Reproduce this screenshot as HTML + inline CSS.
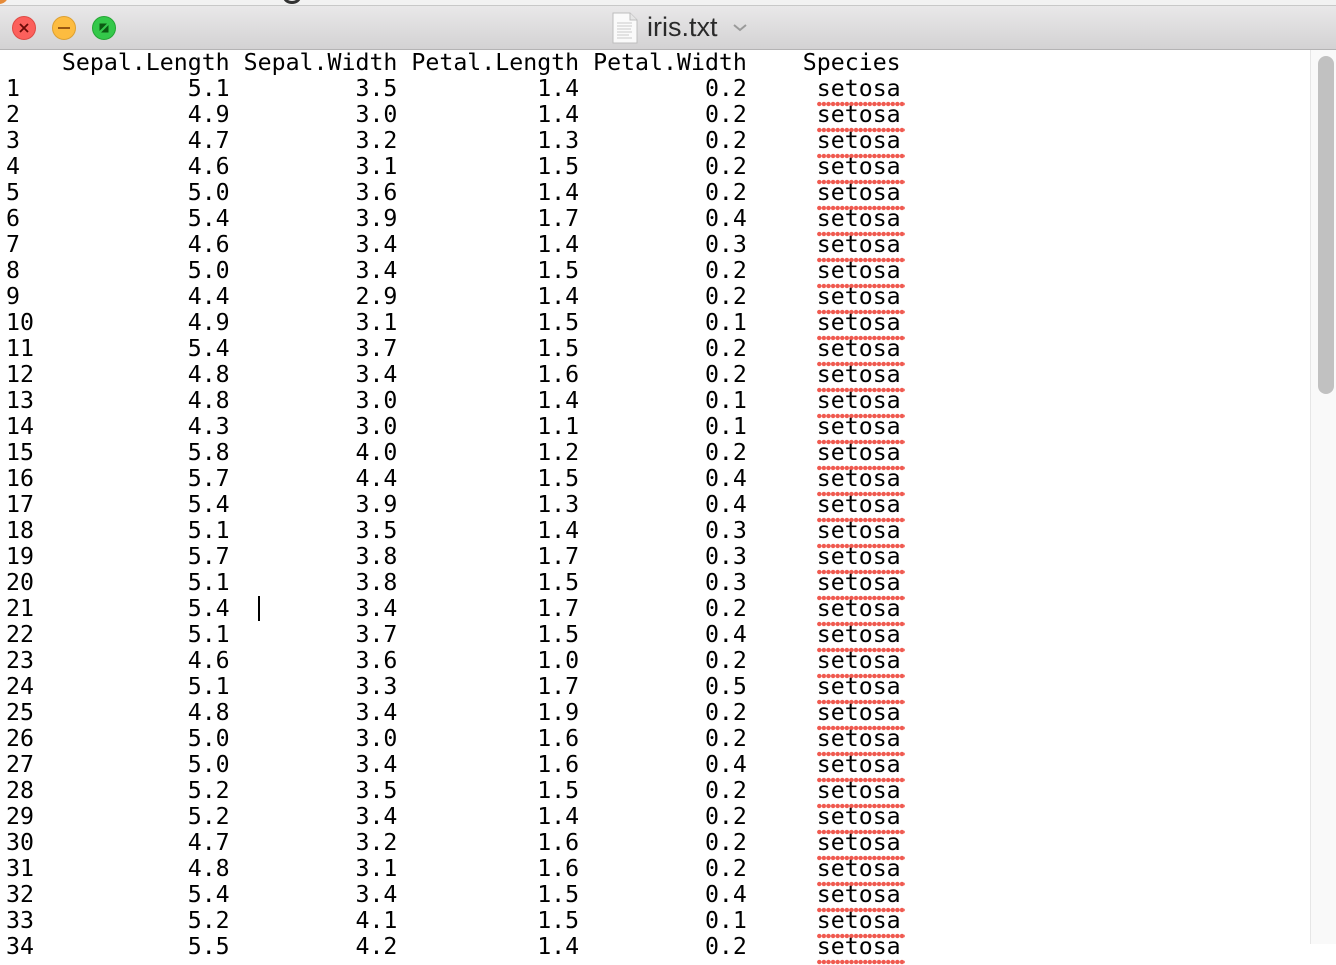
<!DOCTYPE html>
<html><head><meta charset="utf-8">
<style>
html,body{margin:0;padding:0;width:1336px;height:944px;overflow:hidden;background:#fff;}
.top{position:absolute;left:0;top:0;width:1336px;height:5px;background:#f2f2f2;}
.bar{position:absolute;left:0;top:5px;width:1336px;height:45px;background:linear-gradient(#e9e8e9,#d3d2d3);border-bottom:1px solid #b4b3b4;border-top:1px solid #c8c8c8;box-sizing:border-box;}
.tl{position:absolute;top:10px;width:24px;height:24px;border-radius:50%;box-sizing:border-box;}
.title{position:absolute;left:647px;top:6px;font:27px "Liberation Sans",sans-serif;color:#2a2a2a;}
pre{position:absolute;left:6px;top:50px;margin:0;font:23.22px/26px "DejaVu Sans Mono",monospace;color:#000;}
.s{position:relative;}
.s::after{content:"";position:absolute;left:0;right:-4px;bottom:-5px;height:6px;background:radial-gradient(circle,#f05a50 2px,transparent 2.4px) 0 0/4.6px 6px repeat-x;}
.track{position:absolute;left:1310px;top:50px;width:26px;height:894px;background:#f9f9f9;border-left:1px solid #e6e6e6;}
.thumb{position:absolute;left:1318px;top:56px;width:16px;height:338px;border-radius:8px;background:#c1c1c1;}
.cur{position:absolute;left:258px;top:596px;width:2px;height:25px;background:#000;}
</style></head><body>
<div class="top"></div>
<div style="position:absolute;left:-10px;top:-12px;width:18px;height:16px;border-radius:50%;background:#e58b3a"></div>
<div style="position:absolute;left:283px;top:-10px;width:18px;height:14px;border-radius:50%;border:3px solid #333;box-sizing:border-box"></div>
<div class="bar">
<div class="tl" style="left:12px;background:#fc605c;border:1px solid #de4a44"><svg width="22" height="22" style="position:absolute;left:0;top:0"><path d="M7 7L15 15M15 7L7 15" stroke="#6b0a06" stroke-width="1.8"/></svg></div>
<div class="tl" style="left:52px;background:#fdbc40;border:1px solid #dda031"><div style="position:absolute;left:5px;top:10px;width:12px;height:2px;background:#985712"></div></div>
<div class="tl" style="left:92px;background:#34c84a;border:1px solid #24a634"><svg width="22" height="22" style="position:absolute;left:0;top:0"><path d="M6.5 6.5h7.5L6.5 14z M15.5 15.5h-7.5L15.5 8z" fill="#0b5a12"/></svg></div>
<svg style="position:absolute;left:612px;top:6px" width="26" height="32"><path d="M1 1h17l7 7v23H1z" fill="#fafafa" stroke="#bdbdbd"/><path d="M18 1v7h7" fill="#e6e6e6" stroke="#bdbdbd"/><g stroke="#c9c9c9" stroke-width="1"><path d="M5 11h15M5 14h15M5 17h14M5 20h15M5 23h12M5 26h15"/></g></svg>
<div class="title">iris.txt</div>
<svg style="position:absolute;left:732px;top:17px" width="16" height="10"><path d="M2 2l6 5 6-5" fill="none" stroke="#9a9a9a" stroke-width="2"/></svg>
</div>
<pre>    Sepal.Length Sepal.Width Petal.Length Petal.Width    Species
1            5.1         3.5          1.4         0.2     <span class="s">setosa</span>
2            4.9         3.0          1.4         0.2     <span class="s">setosa</span>
3            4.7         3.2          1.3         0.2     <span class="s">setosa</span>
4            4.6         3.1          1.5         0.2     <span class="s">setosa</span>
5            5.0         3.6          1.4         0.2     <span class="s">setosa</span>
6            5.4         3.9          1.7         0.4     <span class="s">setosa</span>
7            4.6         3.4          1.4         0.3     <span class="s">setosa</span>
8            5.0         3.4          1.5         0.2     <span class="s">setosa</span>
9            4.4         2.9          1.4         0.2     <span class="s">setosa</span>
10           4.9         3.1          1.5         0.1     <span class="s">setosa</span>
11           5.4         3.7          1.5         0.2     <span class="s">setosa</span>
12           4.8         3.4          1.6         0.2     <span class="s">setosa</span>
13           4.8         3.0          1.4         0.1     <span class="s">setosa</span>
14           4.3         3.0          1.1         0.1     <span class="s">setosa</span>
15           5.8         4.0          1.2         0.2     <span class="s">setosa</span>
16           5.7         4.4          1.5         0.4     <span class="s">setosa</span>
17           5.4         3.9          1.3         0.4     <span class="s">setosa</span>
18           5.1         3.5          1.4         0.3     <span class="s">setosa</span>
19           5.7         3.8          1.7         0.3     <span class="s">setosa</span>
20           5.1         3.8          1.5         0.3     <span class="s">setosa</span>
21           5.4         3.4          1.7         0.2     <span class="s">setosa</span>
22           5.1         3.7          1.5         0.4     <span class="s">setosa</span>
23           4.6         3.6          1.0         0.2     <span class="s">setosa</span>
24           5.1         3.3          1.7         0.5     <span class="s">setosa</span>
25           4.8         3.4          1.9         0.2     <span class="s">setosa</span>
26           5.0         3.0          1.6         0.2     <span class="s">setosa</span>
27           5.0         3.4          1.6         0.4     <span class="s">setosa</span>
28           5.2         3.5          1.5         0.2     <span class="s">setosa</span>
29           5.2         3.4          1.4         0.2     <span class="s">setosa</span>
30           4.7         3.2          1.6         0.2     <span class="s">setosa</span>
31           4.8         3.1          1.6         0.2     <span class="s">setosa</span>
32           5.4         3.4          1.5         0.4     <span class="s">setosa</span>
33           5.2         4.1          1.5         0.1     <span class="s">setosa</span>
34           5.5         4.2          1.4         0.2     <span class="s">setosa</span></pre>
<div class="cur"></div>
<div class="track"></div>
<div class="thumb"></div>
</body></html>
